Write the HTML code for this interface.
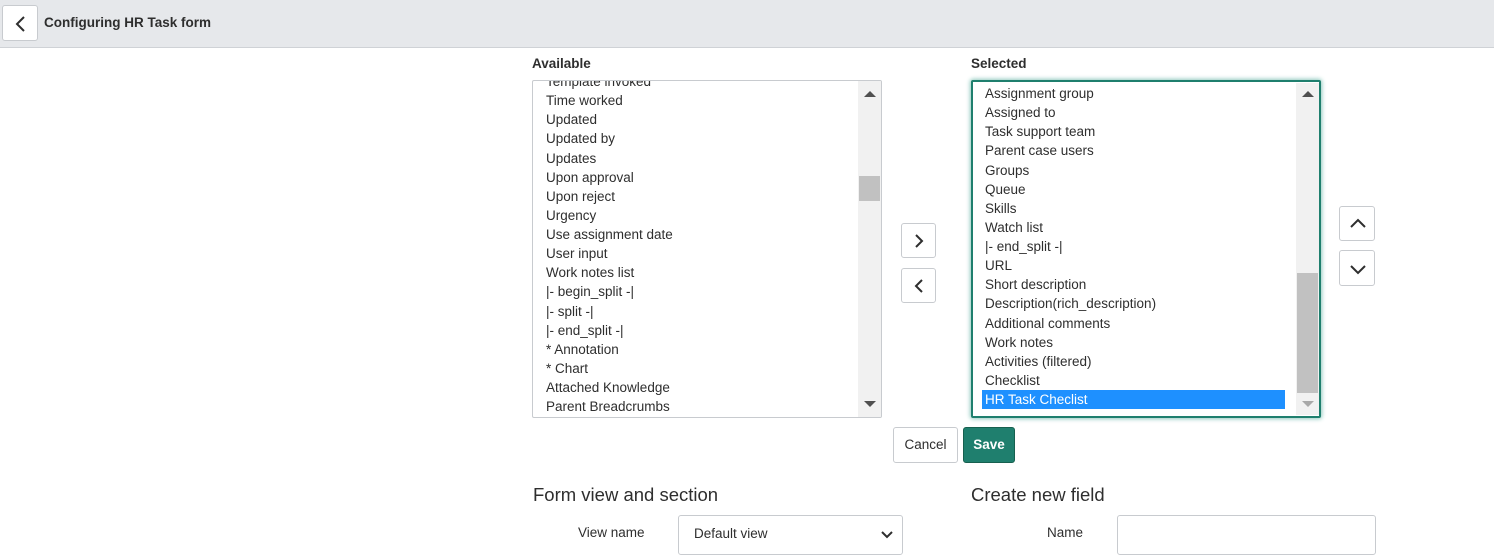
<!DOCTYPE html>
<html><head><meta charset="utf-8"><style>
*{box-sizing:border-box;margin:0;padding:0}
body{width:1494px;height:538px;overflow:hidden;background:#fff;font-family:"Liberation Sans",sans-serif;color:#2e2e2e;position:relative}
.a{position:absolute}
.hdr{left:0;top:0;width:1494px;height:48px;background:#e6e8eb;border-bottom:1px solid #cfd2d6}
.btn{position:absolute;background:#fff;border:1px solid #c8cbcf;border-radius:3px}
.lbl{font-size:13.5px;font-weight:bold;color:#2e2e2e}
.list{position:absolute;border:1px solid #c8cbcf;background:#fff;overflow:hidden;border-radius:2px}
.items{position:absolute;left:0;font-size:13.5px;line-height:19.125px;white-space:nowrap}
.items div{padding-left:13px}
.sb{position:absolute;top:0;width:23px;bottom:0;background:#f1f1f1}
.tri{position:absolute;left:6px;width:0;height:0;border-left:6px solid transparent;border-right:6px solid transparent}
</style></head><body>
<div class="a hdr"></div>
<div class="btn" style="left:2px;top:5px;width:36px;height:36px"><svg width="36" height="36" style="position:absolute;left:0;top:0"><path d="M21 11 L14 18 L21 25" stroke="#2e2e2e" stroke-width="2" fill="none"/></svg></div>
<div class="a" style="left:44px;top:15px;font-size:13.5px;font-weight:bold;color:#2e2e2e">Configuring HR Task form</div>

<div class="a lbl" style="left:532px;top:56px">Available</div>
<div class="list" style="left:532px;top:80px;width:350px;height:338px">
 <div class="items" style="top:-9px;left:0">
 <div>Template invoked</div><div>Time worked</div><div>Updated</div><div>Updated by</div><div>Updates</div><div>Upon approval</div><div>Upon reject</div><div>Urgency</div><div>Use assignment date</div><div>User input</div><div>Work notes list</div><div>|- begin_split -|</div><div>|- split -|</div><div>|- end_split -|</div><div>* Annotation</div><div>* Chart</div><div>Attached Knowledge</div><div>Parent Breadcrumbs</div>
 </div>
 <div class="sb" style="left:325px"><div class="tri" style="top:10px;border-bottom:6px solid #505050"></div><div class="a" style="left:1px;top:95px;width:21px;height:25px;background:#c1c1c1"></div><div class="tri" style="bottom:10px;border-top:6px solid #505050"></div></div>
</div>

<div class="btn" style="left:901px;top:223px;width:35px;height:35px"><svg width="35" height="35" style="position:absolute;left:0;top:0"><path d="M14 11 L20 17 L14 23" stroke="#2e2e2e" stroke-width="2" fill="none"/></svg></div>
<div class="btn" style="left:901px;top:268px;width:35px;height:35px"><svg width="35" height="35" style="position:absolute;left:0;top:0"><path d="M20 11 L14 17 L20 23" stroke="#2e2e2e" stroke-width="2" fill="none"/></svg></div>

<div class="a lbl" style="left:971px;top:56px">Selected</div>
<div class="list" style="left:971px;top:80px;width:350px;height:338px;border:2px solid #1f7f6e;box-shadow:0 0 4px 1px #8fc9be">
 <div class="items" style="top:2px;left:-1px;width:320px">
 <div>Assignment group</div><div>Assigned to</div><div>Task support team</div><div>Parent case users</div><div>Groups</div><div>Queue</div><div>Skills</div><div>Watch list</div><div>|- end_split -|</div><div>URL</div><div>Short description</div><div>Description(rich_description)</div><div>Additional comments</div><div>Work notes</div><div>Activities (filtered)</div><div>Checklist</div><div style="background:#1e90ff;color:#fff;margin-left:10px;padding-left:3px;width:303px">HR Task Checlist</div>
 </div>
 <div class="sb" style="left:323px;top:1px;bottom:1px"><div class="tri" style="top:8px;border-bottom:6px solid #505050"></div><div class="a" style="left:1px;top:190px;width:21px;height:120px;background:#c1c1c1"></div><div class="tri" style="bottom:8px;border-top:6px solid #a8a8a8"></div></div>
</div>

<div class="btn" style="left:1339px;top:206px;width:36px;height:35px"><svg width="36" height="35" style="position:absolute;left:0;top:0"><path d="M11 20 L18 13 L25 20" stroke="#2e2e2e" stroke-width="2" fill="none"/></svg></div>
<div class="btn" style="left:1339px;top:250px;width:36px;height:36px"><svg width="36" height="36" style="position:absolute;left:0;top:0"><path d="M11 15 L18 22 L25 15" stroke="#2e2e2e" stroke-width="2" fill="none"/></svg></div>

<div class="btn" style="left:893px;top:427px;width:65px;height:36px;font-size:13.5px;text-align:center;line-height:34px">Cancel</div>
<div class="btn" style="left:963px;top:427px;width:52px;height:36px;background:#1f7f6e;border-color:#17604f;color:#fff;font-weight:bold;font-size:13.5px;text-align:center;line-height:34px">Save</div>

<div class="a" style="left:533px;top:484px;font-size:18.5px">Form view and section</div>
<div class="a" style="left:971px;top:484px;font-size:18.5px">Create new field</div>
<div class="a" style="left:578px;top:525px;font-size:13.5px">View name</div>
<div class="btn" style="left:678px;top:515px;width:225px;height:40px"><span style="position:absolute;left:15px;top:10px;font-size:13.5px">Default view</span><svg width="14" height="10" style="position:absolute;right:8px;top:14px"><path d="M2 2 L7 7 L12 2" stroke="#2e2e2e" stroke-width="2" fill="none"/></svg></div>
<div class="a" style="left:1047px;top:525px;font-size:13.5px">Name</div>
<div class="btn" style="left:1117px;top:515px;width:259px;height:40px"></div>
</body></html>
